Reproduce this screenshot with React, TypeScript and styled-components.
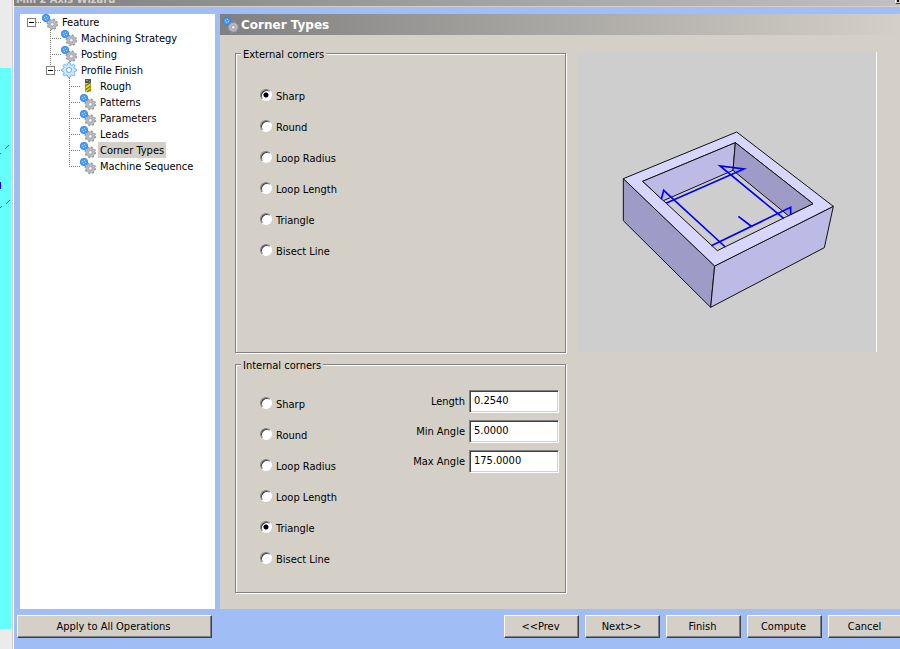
import React from "react";
import styled, { createGlobalStyle, css } from "styled-components";

const face = "#d4d0c8";
const blue = "#a0bdf5";

const GlobalStyle = createGlobalStyle`
  *, *::before, *::after { box-sizing: border-box; }
  body {
    margin: 0;
    overflow: hidden;
    background: #ebebeb;
    color: #000;
    font-family: Tahoma, "DejaVu Sans Condensed", "DejaVu Sans", sans-serif;
    font-stretch: condensed;
    font-size: 11px;
    line-height: 16px;
  }
`;

const Desktop = styled.div`
  display: flex;
  min-height: 100vh;
  overflow: hidden;
`;

const CanvasStrip = styled.div`
  flex: 0 0 12px;
  padding: 68px 1px 20px 0;
  display: flex;
  background: #ebebeb;
`;

const Canvas = styled.div`
  flex: 1;
  background: #66ffff;
  svg { display: block; }
`;

const Window = styled.div`
  flex: 1;
  min-width: 0;
  display: flex;
  flex-direction: column;
  border-left: 1px solid ${face};
  box-shadow: inset 1px 0 0 #fff;
  padding-left: 1px;
`;

const TitleBar = styled.header`
  height: 7px;
  display: flex;
  align-items: flex-end;
  justify-content: space-between;
  overflow: hidden;
  padding-left: 2px;
  border-bottom: 1px solid ${face};
  background: linear-gradient(90deg, #808080, #c0c0c0);
`;

const WindowTitle = styled.h1`
  margin: 0;
  font-size: 11px;
  line-height: 12px;
  font-weight: bold;
  color: ${face};
`;

const CloseButton = styled.button`
  width: 5px;
  height: 16px;
  margin-bottom: 2px;
  padding: 0;
  border: solid;
  border-width: 1px 0 1px 1px;
  border-color: #fff #404040 #404040 #fff;
  background: ${face};
  overflow: hidden;
  svg { display: block; margin-top: 4px; }
`;

const Body = styled.div`
  flex: 1;
  display: flex;
  gap: 5px;
  padding: 7px 0 6px 6px;
  background: ${blue};
`;

const TreePane = styled.nav`
  flex: 0 0 195px;
  padding-left: 3px;
  background: #fff;
`;

const Branch = styled.ul<{ $nested?: boolean; $tail?: number }>`
  list-style: none;
  margin: 0;
  padding: 0 0 0 ${(p) => (p.$nested ? 19 : 0)}px;
  ${(p) =>
    p.$nested &&
    css`
      background: repeating-linear-gradient(180deg, #808080 0 1px, transparent 1px 2px) 27px 0 / 1px
        calc(100% - ${8 + (p.$tail ?? 0) * 16}px) no-repeat;
    `}
`;

const TreeRow = styled.div`
  display: flex;
  align-items: center;
  height: 16px;
`;

const Joint = styled.span`
  flex: 0 0 19px;
  height: 16px;
  display: flex;
  align-items: center;
  padding-left: 8px;
  &::after {
    content: "";
    flex: 1;
    height: 1px;
    background: repeating-linear-gradient(90deg, #808080 0 1px, transparent 1px 2px);
  }
`;

const Expander = styled.button`
  width: 9px;
  height: 9px;
  padding: 0;
  margin-left: -4px;
  border: 1px solid #808080;
  background: linear-gradient(#000, #000) center / 5px 1px no-repeat #fff;
`;

const Glyph = styled.svg`
  flex: 0 0 auto;
  display: block;
  width: 16px;
  height: 16px;
`;

const NodeLabel = styled.a<{ $selected?: boolean }>`
  margin-left: 2px;
  padding: 0 2px;
  height: 16px;
  line-height: 18px;
  color: #000;
  text-decoration: none;
  white-space: nowrap;
  background: ${(p) => (p.$selected ? face : "transparent")};
`;

const Page = styled.main`
  flex: 1;
  min-width: 0;
  background: ${face};
`;

const PageHeader = styled.div`
  display: flex;
  align-items: center;
  gap: 2px;
  height: 21px;
  padding-left: 3px;
  background: linear-gradient(90deg, #808080, ${face});
`;

const PageTitle = styled.h2`
  margin: 0;
  font-family: "DejaVu Sans", sans-serif;
  font-stretch: normal;
  font-size: 12px;
  font-weight: bold;
  color: #fff;
`;

const PageContent = styled.div`
  display: grid;
  grid-template-columns: minmax(0, 331px) minmax(0, 300px);
  column-gap: 11px;
  align-items: start;
  padding: 9px 15px 15px;
`;

const Groups = styled.div`
  display: grid;
  gap: 2px;
`;

const Group = styled.fieldset<{ $compact?: boolean }>`
  min-width: 0;
  margin: 0;
  padding: ${(p) => (p.$compact ? "14px 6px 18px" : "17px 6px 86px")} 24px;
  border: 1px solid #808080;
  box-shadow: 1px 1px 0 #fff, inset 1px 1px 0 #fff;
`;

const GroupRow = styled.div`
  display: flex;
  justify-content: space-between;
  align-items: flex-start;
`;

const Legend = styled.legend`
  margin-left: -19px;
  padding: 3px 2px 0;
  background: ${face};
`;

const Choice = styled.label`
  display: flex;
  align-items: center;
  gap: 4px;
  height: 31px;
  padding-top: 2px;
`;

const Radio = styled.input`
  appearance: none;
  width: 12px;
  height: 12px;
  margin: 0 0 4px;
  border: 1px solid;
  border-color: #808080 #fff #fff #808080;
  border-radius: 50%;
  background: #fff;
  box-shadow: inset 1px 1px 0 #404040;
  &:checked {
    background: radial-gradient(circle at center, #000 0 2px, #fff 3px);
  }
`;

const Fields = styled.div`
  display: grid;
  grid-template-columns: auto 90px;
  column-gap: 4px;
  row-gap: 7px;
  align-items: center;
  padding-top: 2px;
  text-align: right;
`;

const TextBox = styled.input`
  width: 100%;
  height: 23px;
  padding: 0 4px 3px;
  border: 1px solid;
  border-color: #808080 #fff #fff #808080;
  box-shadow: inset 1px 1px 0 #404040, inset -1px -1px 0 ${face};
  background: #fff;
  font: inherit;
`;

const Preview = styled.figure`
  margin: 8px 0 0;
  border-right: 1px solid #fff;
  background: #cecece;
  svg { display: block; width: 100%; height: auto; }
`;

const Footer = styled.footer`
  display: flex;
  justify-content: space-between;
  padding: 0 0 11px 3px;
  background: ${blue};
`;

const Steps = styled.div`
  display: flex;
  gap: 6px;
  margin-right: -3px;
`;

const PushButton = styled.button<{ $wide?: boolean }>`
  width: ${(p) => (p.$wide ? 195 : 75)}px;
  height: 23px;
  padding: 1px 2px 0 0;
  border: 1px solid;
  border-color: #fff #404040 #404040 #fff;
  box-shadow: inset -1px -1px 0 #808080;
  background: ${face};
  color: #000;
  font: inherit;
  white-space: nowrap;
`;

const Gears = () => (
  <Glyph viewBox="0 0 16 16" aria-hidden="true">
    <circle cx="10.3" cy="10.3" r="5" fill="none" stroke="#9696a2" strokeWidth="1.6" strokeDasharray="1.9 2.03" />
    <circle cx="10.3" cy="10.3" r="3.2" fill="none" stroke="#b9b9c4" strokeWidth="2.8" />
    <circle cx="10.3" cy="10.3" r="4.5" fill="none" stroke="#92929d" strokeWidth="0.5" />
    <circle cx="10.3" cy="10.3" r="1.8" fill="#f4f4f4" stroke="#92929d" strokeWidth="0.7" />
    <circle cx="4" cy="4" r="3.7" fill="#4a9ff6" stroke="#2c7fe0" strokeWidth="0.8" />
    <path d="M2 3.5h1M4 2.5h1M5 4.500h1M3 5.500h1" stroke="#a5d2ff" strokeWidth="1" />
  </Glyph>
);

const BlueGear = () => (
  <Glyph viewBox="0 0 16 16" aria-hidden="true">
    <path
      d="M7 .7h2l.5 2 1.4.6 1.8-1.1 1.3 1.3-1.1 1.8.6 1.4 1.9.5v1.8l-1.9.5-.6 1.4 1.1 1.8-1.3 1.3-1.8-1.1-1.4.6-.5 1.9H7l-.5-1.9-1.4-.6L3.300 14 2 12.700l1.100-1.800-.6-1.400L.6 9V7.200l1.900-.5.6-1.400L2 3.500l1.300-1.300 1.800 1.100 1.400-.6z"
      fill="#cfe8ff"
      stroke="#5eaaf5"
      strokeWidth="0.9"
    />
    <circle cx="8" cy="8" r="2.5" fill="#fff" stroke="#5eaaf5" />
  </Glyph>
);

const Cutter = () => (
  <Glyph viewBox="0 0 16 16" aria-hidden="true">
    <path d="M5 1h6v4H5z" fill="#555" />
    <path d="M6 2h2v1H6zM9 3h1v1H9z" fill="#999" />
    <path d="M5 5h6v9H5z" fill="#e5dc20" />
    <path d="M5 8l5-3M5 12l6-4M7 14l4-3" stroke="#77700c" strokeWidth="1.1" />
    <path d="M5.500 5v9M10.500 5v9" stroke="#9b9212" strokeWidth="0.7" />
  </Glyph>
);

type TreeNode = { name: string; icon?: "gear" | "cutter"; selected?: boolean; children?: TreeNode[] };

const tree: TreeNode[] = [
  {
    name: "Feature",
    children: [
      { name: "Machining Strategy" },
      { name: "Posting" },
      {
        name: "Profile Finish",
        icon: "gear",
        children: [
          { name: "Rough", icon: "cutter" },
          { name: "Patterns" },
          { name: "Parameters" },
          { name: "Leads" },
          { name: "Corner Types", selected: true },
          { name: "Machine Sequence" },
        ],
      },
    ],
  },
];

const Nodes = ({ nodes, nested }: { nodes: TreeNode[]; nested?: boolean }) => (
  <Branch $nested={nested} $tail={nodes[nodes.length - 1].children?.length}>
    {nodes.map((n) => (
      <li key={n.name}>
        <TreeRow>
          <Joint>{n.children && <Expander aria-label={`Collapse ${n.name}`} />}</Joint>
          {n.icon === "gear" ? <BlueGear /> : n.icon === "cutter" ? <Cutter /> : <Gears />}
          <NodeLabel href="#" $selected={n.selected}>{n.name}</NodeLabel>
        </TreeRow>
        {n.children && <Nodes nodes={n.children} nested />}
      </li>
    ))}
  </Branch>
);

const cornerTypes = ["Sharp", "Round", "Loop Radius", "Loop Length", "Triangle", "Bisect Line"];

const Choices = ({ group, initial }: { group: string; initial: string }) => (
  <div>
    {cornerTypes.map((t) => (
      <Choice key={t}>
        <Radio type="radio" name={group} defaultChecked={t === initial} />
        {t}
      </Choice>
    ))}
  </div>
);

const fields = [
  { id: "length", label: "Length", value: "0.2540" },
  { id: "min-angle", label: "Min Angle", value: "5.0000" },
  { id: "max-angle", label: "Max Angle", value: "175.0000" },
];

const PocketDrawing = () => (
  <svg viewBox="21 36 897 900" role="img" aria-label="Pocket with triangular corner moves">
    <g stroke="#111" strokeWidth="3" strokeLinejoin="round">
      <path d="M160 416L434 678L422 802L160 542z" fill="#9e9cc6" />
      <path d="M434 678L790 499L763 623L422 802z" fill="#bdbbe5" />
      <path d="M500 276L790 499L434 678L160 416zM496 308L218 424L442 632L729 491z" fill="#d8d6ff" fillRule="evenodd" />
      <path d="M218 424L496 308L489 391L280 482z" fill="#bdbbe5" />
      <path d="M496 308L729 491L655 527L489 391z" fill="#9e9cc6" />
    </g>
    <path
      d="M274 478L281 451L466 621M288 490L522 387L450 378L641 535M662 524V502L424 617M505 529L543 558"
      fill="none"
      stroke="#0000f5"
      strokeWidth="5"
    />
  </svg>
);

export default function App() {
  return (
    <>
      <GlobalStyle />
      <Desktop>
        <CanvasStrip>
          <Canvas>
            <svg width="11" height="160" viewBox="0 0 11 160" aria-hidden="true" shapeRendering="crispEdges">
              <path d="M5 81l4-4M0 85.500h1M0 140l2-2M6 136l4-4" stroke="#d800ff" />
              <path d="M0 114h1v7H0z" fill="#00f" />
            </svg>
          </Canvas>
        </CanvasStrip>
        <Window>
          <TitleBar>
            <WindowTitle>Mill 2 Axis Wizard</WindowTitle>
            <CloseButton aria-label="Close">
              <svg width="4" height="8" viewBox="0 0 4 8" aria-hidden="true">
                <path d="M1 7h2" stroke="#000" strokeWidth="2" />
              </svg>
            </CloseButton>
          </TitleBar>
          <Body>
            <TreePane><Nodes nodes={tree} /></TreePane>
            <Page>
              <PageHeader>
                <Gears />
                <PageTitle>Corner Types</PageTitle>
              </PageHeader>
              <PageContent>
                <Groups>
                  <Group>
                    <Legend>External corners</Legend>
                    <Choices group="external" initial="Sharp" />
                  </Group>
                  <Group $compact>
                    <Legend>Internal corners</Legend>
                    <GroupRow>
                      <Choices group="internal" initial="Triangle" />
                      <Fields>
                        {fields.map((f) => (
                          <React.Fragment key={f.id}>
                            <label htmlFor={f.id}>{f.label}</label>
                            <TextBox id={f.id} defaultValue={f.value} />
                          </React.Fragment>
                        ))}
                      </Fields>
                    </GroupRow>
                  </Group>
                </Groups>
                <Preview><PocketDrawing /></Preview>
              </PageContent>
            </Page>
          </Body>
          <Footer>
            <PushButton $wide>Apply to All Operations</PushButton>
            <Steps>
              {["<<Prev", "Next>>", "Finish", "Compute", "Cancel"].map((s) => (
                <PushButton key={s}>{s}</PushButton>
              ))}
            </Steps>
          </Footer>
        </Window>
      </Desktop>
    </>
  );
}
